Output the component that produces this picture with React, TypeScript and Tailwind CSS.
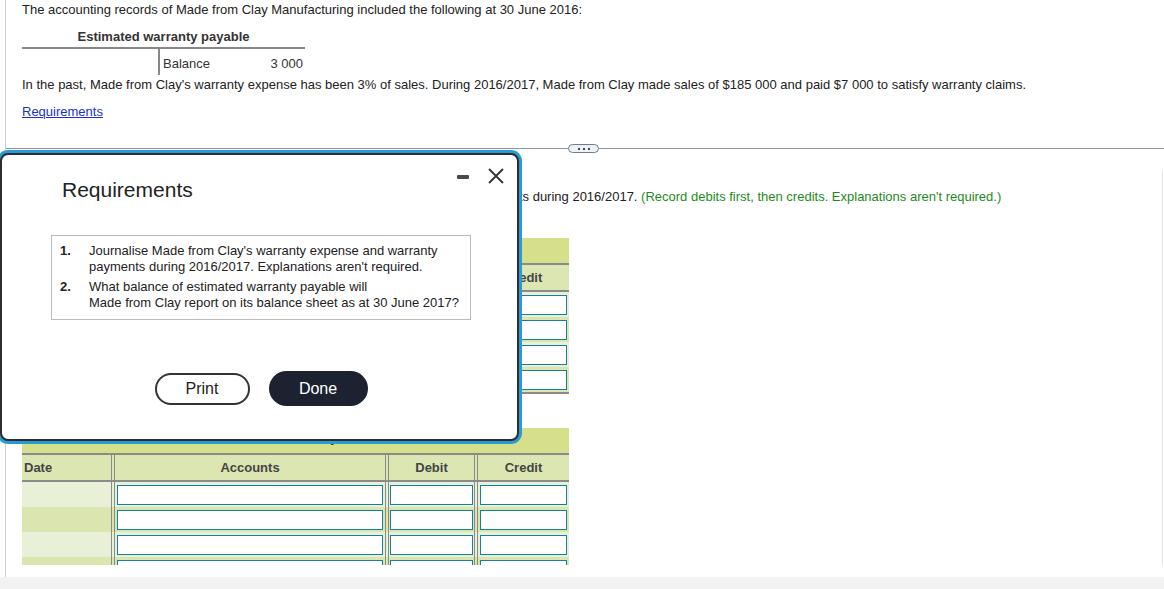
import React from "react";

const rowColors = ["bg-[#e8f0d8]", "bg-[#dae5b0]", "bg-[#e8f0d8]", "bg-[#dae5b0]"];

function Field() {
  return <div className="h-[20px] w-full border border-[#13809f] bg-white" />;
}

function JournalTable({ rows, bottomLine }: { rows: number; bottomLine: boolean }) {
  return (
    <div className="w-[547px]">
      <div className="flex h-[25px] items-center justify-center bg-[#d6e08b] pb-[6px] font-bold text-[#3f3f3f]">
        Journal Entry
      </div>
      <div className="h-[2px] bg-[#8a8a8a]" />
      <div className="flex h-[25px] bg-[#dce6b2] font-bold text-[#444]">
        <div className="flex w-[90px] items-center border-r border-[#8a8a8a] pl-[2px]">Date</div>
        <div className="ml-[2px] flex w-[272px] items-center justify-center border-x border-[#8a8a8a]">
          Accounts
        </div>
        <div className="ml-[2px] flex w-[87px] items-center justify-center border-x border-[#8a8a8a]">
          Debit
        </div>
        <div className="ml-[2px] flex w-[92px] items-center justify-center border-l border-[#8a8a8a]">
          Credit
        </div>
      </div>
      <div className="h-[2px] bg-[#8a8a8a]" />
      {rowColors.slice(0, rows).map((c, i) => (
        <div key={i} className={`flex h-[25px] ${c}`}>
          <div className="w-[90px] border-r border-[#8a8a8a]" />
          <div className="ml-[2px] flex w-[272px] items-center border-x border-[#8a8a8a] px-[2px]">
            <Field />
          </div>
          <div className="ml-[2px] flex w-[87px] items-center border-x border-[#8a8a8a] px-[1px]">
            <Field />
          </div>
          <div className="ml-[2px] flex w-[92px] items-center border-l border-[#8a8a8a] px-[2px]">
            <Field />
          </div>
        </div>
      ))}
      {bottomLine && <div className="h-[2px] bg-[#8a8a8a]" />}
    </div>
  );
}

export default function App() {
  return (
    <div className="relative flex h-[589px] w-[1164px] flex-col overflow-hidden bg-white text-[13px] leading-[16px] text-[#222] [font-family:'Liberation_Sans',Arial,sans-serif]">
      <div className="ml-[5px] flex h-[577px] flex-col border-l border-[#cdd1d9]">
        {/* Question */}
        <div className="flex flex-col pl-[16px] pt-[2px]">
          <p>The accounting records of Made from Clay Manufacturing included the following at 30 June 2016:</p>
          <div className="mt-[11px] w-[283px]">
            <div className="text-center font-bold text-[#333]">Estimated warranty payable</div>
            <div className="mt-[2px] h-[2px] bg-[#888]" />
            <div className="flex h-[26px]">
              <div className="w-[136px]" />
              <div className="flex flex-1 justify-between border-l-2 border-[#888] pl-[3px] pr-[2px] pt-[7px] text-[#333]">
                <span>Balance</span>
                <span>3 000</span>
              </div>
            </div>
          </div>
          <p className="mt-[2px]">
            In the past, Made from Clay's warranty expense has been 3% of sales. During 2016/2017, Made from Clay made
            sales of $185 000 and paid $7 000 to satisfy warranty claims.
          </p>
          <p className="mt-[11px]">
            <a className="text-[#1a32c8] underline">Requirements</a>
          </p>
        </div>

        {/* Divider */}
        <div className="mt-[24px] flex h-[9px] items-center">
          <div className="h-px w-[562px] bg-[#8a94a3]" />
          <div className="flex h-[9px] w-[31px] items-center justify-center gap-[3px] rounded-full border border-[#6f7d8f] bg-[#eef1f5]">
            <span className="h-[2px] w-[2px] bg-[#3b4a5c]" />
            <span className="h-[2px] w-[2px] bg-[#3b4a5c]" />
            <span className="h-[2px] w-[2px] bg-[#3b4a5c]" />
          </div>
          <div className="h-px flex-1 bg-[#8a94a3]" />
        </div>

        {/* Answer area */}
        <div className="flex h-[412px] flex-col overflow-hidden">
          <div className="mr-[1px] mt-[18px] flex h-[394px] shrink-0 flex-col border-r border-[#e4e4e4] pl-[16px]">
            <p className="ml-[6px] mt-[18px] whitespace-nowrap">
              Requirement 1. Journalise Made from Clay's warranty expense and warranty payments during 2016/2017.{" "}
              <span className="text-[#1e8a1e]">(Record debits first, then credits. Explanations aren't required.)</span>
            </p>
            <div className="mt-[33px]">
              <JournalTable rows={4} bottomLine />
            </div>
            <div className="mt-[34px]">
              <JournalTable rows={4} bottomLine={false} />
            </div>
          </div>
        </div>
      </div>
      <div className="h-[12px] bg-[#f2f2f2]" />

      {/* Requirements modal */}
      <div className="absolute left-0 top-[153px] flex h-[288px] w-[519px] flex-col rounded-[8px] border-2 border-[#2d2d2d] bg-white shadow-[0_0_0_3px_#2a9ad6]">
        <div className="flex items-start justify-between pl-[60px] pr-[13px] pt-[13px]">
          <h2 className="mt-[10px] text-[21px] leading-[24px] text-[#222]">Requirements</h2>
          <div className="flex items-start gap-[19px]">
            <span className="mt-[7px] h-[4px] w-[12px] rounded-[1px] bg-[#4a4a4a]" />
            <svg width="16" height="16" viewBox="0 0 16 16" className="block">
              <path d="M1 1 L15 15 M15 1 L1 15" stroke="#3a3a3a" strokeWidth="2" fill="none" />
            </svg>
          </div>
        </div>
        <div className="ml-[49px] mt-[33px] w-[420px] border border-[#bbb] pb-[8px] pl-[8px] pt-[7px] text-[#222]">
          <div className="flex">
            <span className="w-[29px] shrink-0 font-bold">1.</span>
            <span>
              Journalise Made from Clay's warranty expense and warranty
              <br />
              payments during 2016/2017. Explanations aren't required.
            </span>
          </div>
          <div className="mt-[4px] flex">
            <span className="w-[29px] shrink-0 font-bold">2.</span>
            <span>
              What balance of estimated warranty payable will
              <br />
              Made from Clay report on its balance sheet as at 30 June 2017?
            </span>
          </div>
        </div>
        <div className="mt-[51px] flex items-center justify-center gap-[19px] pl-[3px]">
          <button className="h-[32px] w-[95px] rounded-full border-2 border-[#333] bg-white text-[16px] text-[#222]">
            Print
          </button>
          <button className="h-[35px] w-[99px] rounded-full bg-[#1c2230] text-[16px] text-white">Done</button>
        </div>
      </div>
    </div>
  );
}
